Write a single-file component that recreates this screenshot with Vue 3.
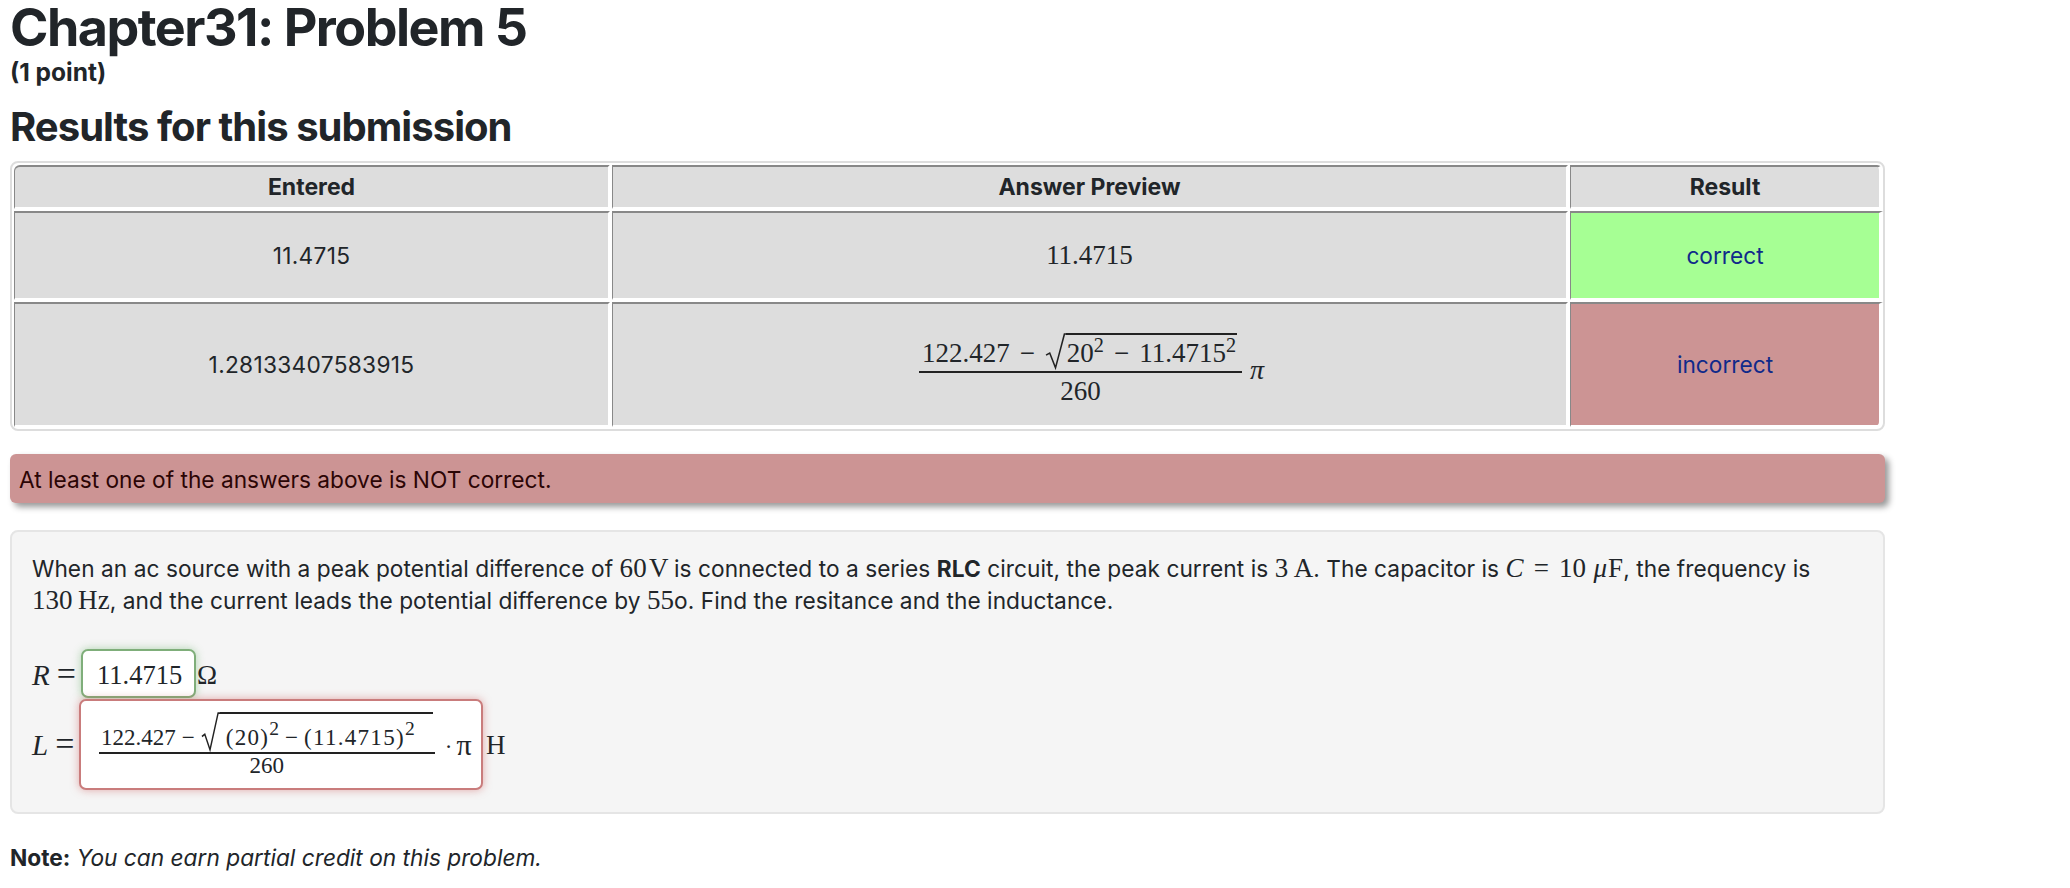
<script setup>
const headers = ['Entered', 'Answer Preview', 'Result']
</script>

<template>
  <div class="page">
    <h1 class="title">Chapter31: Problem 5</h1>
    <div class="points">(1 point)</div>
    <h2 class="subtitle">Results for this submission</h2>

    <div class="table-wrap">
      <table class="results">
        <colgroup>
          <col class="c1" />
          <col class="c2" />
          <col class="c3" />
        </colgroup>
        <tbody>
          <tr class="head">
            <th v-for="h in headers" :key="h">{{ h }}</th>
          </tr>
          <tr class="row-a">
            <td class="entered">11.4715</td>
            <td><span class="m preview">11.4715</span></td>
            <td class="ok">correct</td>
          </tr>
          <tr class="row-b">
            <td class="entered">1.28133407583915</td>
            <td>
              <span class="m preview formula">
                <span class="frac">
                  <span class="num">
                    122.427<span class="op">−</span>
                    <span class="root">
                      <svg class="radical" viewBox="0 0 20 36" preserveAspectRatio="none"><path d="M1 21 L4.5 19 L10 33 L18.5 1 L20 1" fill="none" stroke="#222" stroke-width="1.5" /></svg>
                      <span class="rad">20<sup>2</sup><span class="op">−</span>11.4715<sup>2</sup></span>
                    </span>
                  </span>
                  <span class="den">260</span>
                </span>
                <i class="pi">π</i>
              </span>
            </td>
            <td class="bad">incorrect</td>
          </tr>
        </tbody>
      </table>
    </div>

    <div class="alert">At least one of the answers above is NOT correct.</div>

    <section class="problem">
      <p class="statement">
        When an ac source with a peak potential difference of <span class="m sixty">60&#8202;V</span> is connected to a series <b>RLC</b> circuit, the peak current is <span class="m">3&#8201;A</span>. The capacitor is <span class="m"><i>C</i><span class="eq-in">=</span><span class="ten">10</span>&#8201;<i class="mu">μ</i>F</span>, the frequency is <span class="m">130&#8201;Hz</span>, and the current leads the potential difference by <span class="m">55</span>o. Find the resitance and the inductance.
      </p>
      <div class="answer a1">
        <span class="m var"><i>R</i><span class="eq">=</span></span>
        <span class="box good"><span class="m val">11.4715</span></span>
        <span class="m unit">Ω</span>
      </div>
      <div class="answer a2">
        <span class="m var"><i>L</i><span class="eq">=</span></span>
        <span class="box wrong">
          <span class="m input-math">
            <span class="frac">
              <span class="num">
                122.427<span class="op">−</span>
                <span class="root">
                  <svg class="radical big" viewBox="0 0 20 36" preserveAspectRatio="none"><path d="M1 22 L4 20 L9.5 34 L18 1 L20 1" fill="none" stroke="#222" stroke-width="1.5" /></svg>
                  <span class="rad"><span class="pr">(20)</span><sup>2</sup><span class="op">−</span><span class="pr">(11.4715)</span><sup>2</sup></span>
                </span>
              </span>
              <span class="den">260</span>
            </span>
            <span class="times">·</span><span class="pi2">π</span>
          </span>
        </span>
        <span class="m unit h">H</span>
      </div>
    </section>

    <p class="note"><b>Note:</b> <i>You can earn partial credit on this problem.</i></p>
  </div>
</template>

<style scoped>
.page {
  width: 1875px;
  margin-left: 10px;
  font-family: Inter, "Noto Sans", sans-serif;
  font-size: 22.7px;
  color: #212529;
}
.title {
  margin: 0;
  font-size: 52px;
  line-height: 56px;
  font-weight: 700;
  letter-spacing: -1.5px;
}
.points {
  font-size: 24.5px;
  font-weight: 700;
  line-height: 32px;
  margin-bottom: 15px;
}
.subtitle {
  margin: 0 0 11px;
  font-size: 40px;
  line-height: 47px;
  font-weight: 700;
  letter-spacing: -0.95px;
}
.table-wrap {
  border: 2px solid #ddd;
  border-radius: 8px;
  overflow: hidden;
}
.results {
  width: 100%;
  table-layout: fixed;
  border-collapse: separate;
  border-spacing: 2px;
}
.c1 { width: 596px; }
.c2 { width: 956px; }
.c3 { width: 313px; }
th,
td {
  background: #ddd;
  text-align: center;
  padding: 0;
  border-style: solid;
  border-width: 2px 2px 2px 1.5px;
  border-color: #888 #fff #fff #888;
  box-sizing: border-box;
}
.results th:first-child { border-top-left-radius: 6px; }
.results th:last-child { border-top-right-radius: 6px; border-right-width: 4px; }
.results td:last-child { border-right-width: 4px; }
th {
  font-weight: 700;
  font-size: 23px;
}
.head th { height: 44px; }
.row-a td { height: 89px; }
.row-b td { height: 125px; }
.entered { letter-spacing: 0.3px; }
td.ok {
  background: #a6ff94;
  color: #0f2a8a;
}
td.bad {
  background: #cc9494;
  color: #0f2a8a;
  border-bottom-right-radius: 6px;
}
.m {
  font-family: "Liberation Serif", "DejaVu Serif", serif;
  font-size: 27px;
  line-height: 1;
  white-space: nowrap;
}
.preview { font-size: 27px; }
.formula {
  display: inline-flex;
  align-items: center;
  vertical-align: middle;
  margin-top: 10px;
  margin-left: 4px;
}
.frac {
  display: inline-flex;
  flex-direction: column;
  align-items: center;
}
.num {
  display: flex;
  align-items: flex-end;
  white-space: nowrap;
  border-bottom: 2px solid #222;
  line-height: 36px;
}
.formula .num { padding: 0 5px 0 3px; margin-bottom: 2px; }
.den { line-height: 32px; }
.op { margin: 0 10px; }
.root {
  display: inline-flex;
  align-items: flex-end;
}
.radical {
  width: 21px;
  height: 38px;
  flex: none;
}
.radical.big {
  width: 19px;
  height: 42px;
}
.rad {
  border-top: 2px solid #222;
  line-height: 36px;
  padding: 0 1px;
}
sup {
  font-size: 0.75em;
  line-height: 0;
  vertical-align: 0.5em;
}
.pi { font-size: 28px; margin-left: 8px; }
.alert {
  margin-top: 23px;
  height: 49px;
  line-height: 51px;
  padding-left: 9px;
  background: #cc9494;
  color: #2b0505;
  border-radius: 6px;
  box-shadow: 4px 4px 6px #999;
  box-sizing: border-box;
}
.problem {
  margin-top: 27px;
  height: 284px;
  box-sizing: border-box;
  border: 2px solid #e5e5e5;
  border-radius: 8px;
  background: #f5f5f5;
  padding: 21px 20px 0;
}
.statement {
  margin: 0 0 32px;
  line-height: 32px;
  letter-spacing: 0.05px;
}
.sixty { margin-right: -1px; }
.ten { margin-right: 2px; }
.mu { margin-right: 1px; }
.answer {
  display: flex;
  align-items: center;
}
.var { width: 49px; flex: none; white-space: nowrap; }
.var i { font-size: 29px; }
.eq { margin-left: 7px; font-size: 34px; line-height: 20px; }
.eq-in { margin: 0 10px; }
.val { font-size: 26.5px; }
.a1 .m { margin-top: 3px; }
.a1 { height: 49px; }
.a2 { height: 92px; }
.a2 .var { width: 47px; margin-top: 3px; }
.a2 .unit { margin-top: 3px; }
.box {
  background: #fff;
  border-radius: 7px;
  box-sizing: border-box;
  display: flex;
  align-items: center;
}
.good {
  width: 115px;
  height: 49px;
  border: 2px solid #7fae7a;
  box-shadow: 0 0 8px rgba(90, 170, 90, 0.45);
  padding-left: 14px;
}
.wrong {
  width: 404px;
  height: 91px;
  border: 2px solid #c97c7c;
  box-shadow: 0 0 9px rgba(205, 90, 90, 0.5);
  padding-left: 18px;
}
.unit { margin-left: 1px; }
.h { margin-left: 3px; }
.input-math {
  display: flex;
  align-items: center;
  font-size: 23px;
}
.input-math .num { line-height: 28px; padding: 0 2px; margin-top: 6px; }
.input-math .den { line-height: 24px; margin-bottom: 4px; }
.input-math .op { margin: 0 6px; }
.input-math .rad { padding: 10px 18px 0 6px; line-height: 28px; }
.input-math sup { font-size: 0.85em; }
.input-math .radical.big { height: 40px; }
.pr { letter-spacing: 1.3px; }
.times { margin: 4px 4px 0 10px; }
.pi2 { margin-top: 2px; font-family: "Liberation Serif", serif; font-size: 30px; }
.note {
  margin: 29px 0 0;
  line-height: 30px;
}
</style>
